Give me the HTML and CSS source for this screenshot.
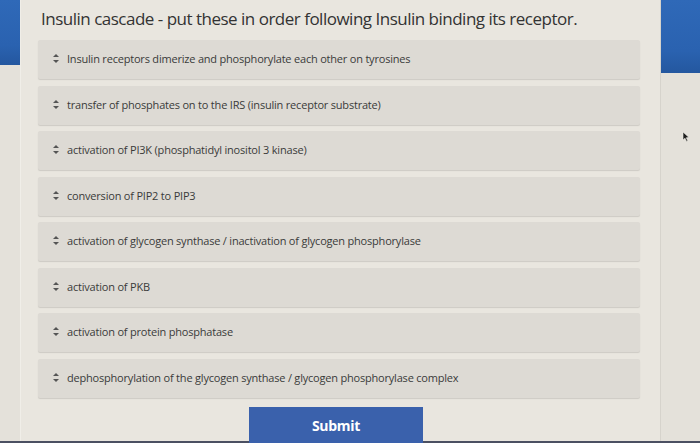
FILE: index.html
```html
<!DOCTYPE html>
<html>
<head>
    <title>Insulin cascade</title>
    <link rel="stylesheet" href="styles.css">
</head>
<body>
    <div class="screen">
        <div class="side side-left">
            <div class="blue-tab left-tab"></div>
        </div>

        <div class="panel">
            <h1 class="question">Insulin cascade - put these in order following Insulin binding its receptor.</h1>

            <ul class="order-list">
                <li class="order-item"><span class="handle"></span>Insulin receptors dimerize and phosphorylate each other on tyrosines</li>
                <li class="order-item"><span class="handle"></span>transfer of phosphates on to the IRS (insulin receptor substrate)</li>
                <li class="order-item"><span class="handle"></span>activation of PI3K (phosphatidyl inositol 3 kinase)</li>
                <li class="order-item"><span class="handle"></span>conversion of PIP2 to PIP3</li>
                <li class="order-item"><span class="handle"></span>activation of glycogen synthase / inactivation of glycogen phosphorylase</li>
                <li class="order-item"><span class="handle"></span>activation of PKB</li>
                <li class="order-item"><span class="handle"></span>activation of protein phosphatase</li>
                <li class="order-item"><span class="handle"></span>dephosphorylation of the glycogen synthase / glycogen phosphorylase complex</li>
            </ul>

            <div class="actions">
                <button class="submit-btn">Submit</button>
            </div>
        </div>

        <div class="side side-right">
            <div class="blue-tab right-tab"></div>
            <svg class="cursor" width="8" height="11" viewBox="0 0 8 11">
                <path d="M1 1 L1 9 L3 7.2 L4.6 10.4 L5.8 9.8 L4.3 6.7 L7 6.5 Z" fill="#1e1e1e" stroke="#f2f0ea" stroke-width="0.6"/>
            </svg>
        </div>
    </div>
    <div class="taskbar"></div>
</body>
</html>
```

FILE: styles.css
```css
body {
    margin: 0;
    height: 443px;
    overflow: hidden;
    background: #e6e3dc;
    font-family: "Open Sans", "Liberation Sans", sans-serif;
    color: #3b3b3b;
}

.screen {
    display: flex;
    height: 441px;
}

.side {
    background: #e4e1da;
}

.side-left {
    width: 20px;
    border-right: 1px solid #f0eee8;
}

.side-right {
    flex: 1;
    border-left: 1px solid #d6d3cc;
    position: relative;
}

.blue-tab {
    background: linear-gradient(to bottom, #2f69b8 0%, #2a62b0 70%, #24579f 100%);
}

.left-tab {
    height: 65px;
}

.right-tab {
    height: 73px;
}

.cursor {
    position: absolute;
    left: 21px;
    top: 131px;
}

.panel {
    width: 639px;
    padding: 6px 20px 0 17px;
    box-sizing: border-box;
    background: #e9e6df;
}

.question {
    margin: 0 0 8px 3px;
    font-size: 17px;
    font-weight: 400;
    letter-spacing: -0.5px;
    line-height: 26px;
    color: #333;
}

.order-list {
    list-style: none;
    margin: 0;
    padding: 0;
    display: flex;
    flex-direction: column;
    gap: 6.5px;
}

.order-item {
    height: 39px;
    display: flex;
    align-items: center;
    padding-left: 15px;
    padding-bottom: 2px;
    box-sizing: border-box;
    background: #dddad4;
    border-radius: 2px;
    box-shadow: 0 1px 1px rgba(0, 0, 0, 0.12);
    font-size: 11px;
    letter-spacing: -0.2px;
    color: #3a3a3a;
}

/* up/down sort arrows */
.handle {
    width: 0;
    height: 9px;
    margin-right: 14px;
    position: relative;
}

.handle::before,
.handle::after {
    content: "";
    position: absolute;
    left: 0;
    border-left: 3px solid transparent;
    border-right: 3px solid transparent;
}

.handle::before {
    top: 0;
    border-bottom: 3px solid #555;
}

.handle::after {
    bottom: 0;
    border-top: 3px solid #555;
}

.actions {
    display: flex;
    padding-top: 9px;
    padding-left: 211px;
}

.submit-btn {
    width: 174px;
    height: 40px;
    border: none;
    border-radius: 0;
    background: #3a61ac;
    color: #fff;
    font-family: "Open Sans", "Liberation Sans", sans-serif;
    font-weight: 700;
    font-size: 14px;
    letter-spacing: -0.3px;
    padding-bottom: 3px;
}

.taskbar {
    height: 2px;
    background: #4b5062;
}
```
